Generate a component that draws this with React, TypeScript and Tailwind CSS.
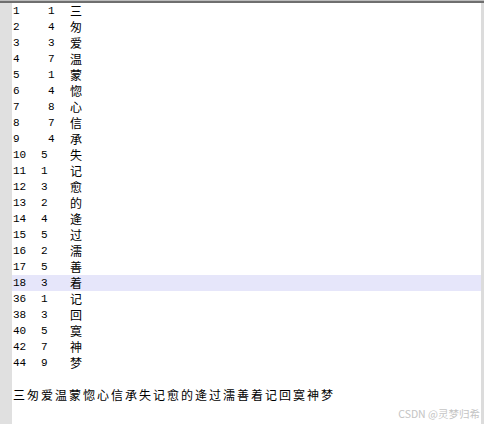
const rows: [string, string, string][] = [
  ["1", "1", "三"],
  ["2", "4", "匆"],
  ["3", "3", "爱"],
  ["4", "7", "温"],
  ["5", "1", "蒙"],
  ["6", "4", "惚"],
  ["7", "8", "心"],
  ["8", "7", "信"],
  ["9", "4", "承"],
  ["10", "5", "失"],
  ["11", "1", "记"],
  ["12", "3", "愈"],
  ["13", "2", "的"],
  ["14", "4", "逄"],
  ["15", "5", "过"],
  ["16", "2", "濡"],
  ["17", "5", "善"],
  ["18", "3", "着"],
  ["36", "1", "记"],
  ["38", "3", "回"],
  ["40", "5", "寞"],
  ["42", "7", "神"],
  ["44", "9", "梦"],
];

const mono = "font-['Liberation_Mono','Noto_Sans_CJK_SC',monospace]";
const cjk = "font-['Noto_Sans_CJK_SC',sans-serif]";

export default function App() {
  return (
    <div className="w-[484px] h-[424px] bg-white flex flex-col overflow-hidden">
      {/* top frame line */}
      <div className="h-px bg-[#bdbdbd]" />
      <div className="h-[2px] bg-[#6f6f6f]" />
      <div className="flex flex-1">
        {/* left gutter */}
        <div className="w-3 bg-[#e0e0e0]" />
        <div className="flex-1 flex flex-col text-black">
          {rows.map(([a, b, c], i) => (
            <div
              key={i}
              className={
                "flex items-center h-4 " + (a === "18" ? "bg-[#e6e6fa]" : "")
              }
            >
              <span className={mono + " text-[11px] pl-px " + (a.length > 1 ? "w-[29px]" : "w-[36px]")}>
                {a}
              </span>
              <span className={mono + " text-[11px] " + (a.length > 1 ? "w-[29px]" : "w-[22px]")}>
                {b}
              </span>
              <span className={cjk + " text-[12px] leading-4"}>{c}</span>
            </div>
          ))}
          <div className="h-4" />
          <div className={cjk + " h-4 pl-px flex items-center text-[12px] tracking-[2px]"}>
            三匆爱温蒙惚心信承失记愈的逄过濡善着记回寞神梦
          </div>
          <div className="flex-1 flex justify-end items-start pr-[1px] pt-[3px]">
            <span className={cjk + " text-[10.5px] text-[#c4c4c4]"}>CSDN @灵梦归希</span>
          </div>
        </div>
        {/* right scrollbar edge */}
        <div className="w-[3px] bg-[#dcdcdc]" />
      </div>
    </div>
  );
}
